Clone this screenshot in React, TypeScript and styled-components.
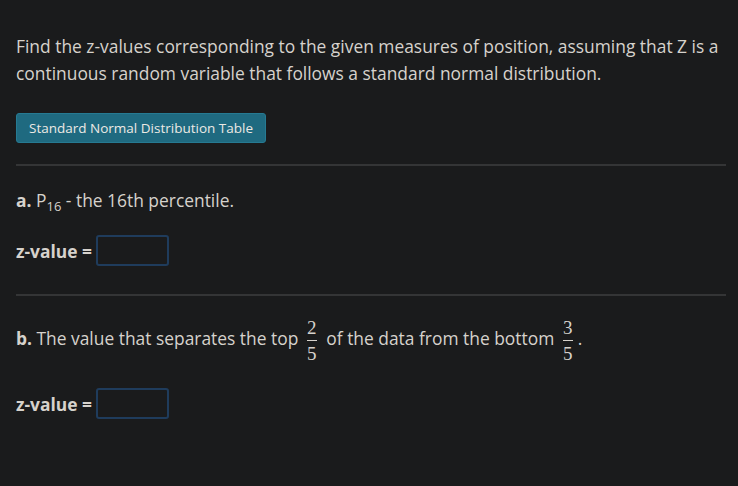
import React from 'react';
import styled, { createGlobalStyle } from 'styled-components';

const Global = createGlobalStyle`
  html, body {
    margin: 0;
    background: #1a1b1c;
  }
  body {
    font-family: "Open Sans", "Liberation Sans", sans-serif;
    color: #d6d2cc;
  }
`;

type FracProps = { num: string; den: string };

const Fraction: React.FC<FracProps> = ({ num, den }) => (
  <S.Frac>
    <S.FracNum>{num}</S.FracNum>
    <S.FracBar />
    <S.FracDen>{den}</S.FracDen>
  </S.Frac>
);

const ZValueRow: React.FC = () => (
  <S.AnswerRow>
    <S.AnswerLabel>z-value =</S.AnswerLabel>
    <S.AnswerInput type="text" aria-label="z-value" />
  </S.AnswerRow>
);

export default function App() {
  return (
    <>
      <Global />
      <S.Page>
        <S.Intro>
          Find the z-values corresponding to the given measures of position, assuming that Z is a continuous random
          variable that follows a standard normal distribution.
        </S.Intro>
        <S.TableButton type="button">Standard Normal Distribution Table</S.TableButton>

        <S.Part>
          <S.Question>
            <b>a.</b> P<sub>16</sub> - the 16th percentile.
          </S.Question>
          <ZValueRow />
        </S.Part>

        <S.Part $fractions>
          <S.Question>
            <b>b.</b> The value that separates the top <Fraction num="2" den="5" /> of the data from the bottom{' '}
            <Fraction num="3" den="5" />.
          </S.Question>
          <ZValueRow />
        </S.Part>
      </S.Page>
    </>
  );
}

const S = {
  Page: styled.div`
    padding: 33px 12px 0 16px;
    display: flex;
    flex-direction: column;
    align-items: flex-start;
  `,
  Intro: styled.p`
    margin: 0;
    font-size: 17.4px;
    line-height: 27px;
  `,
  TableButton: styled.button`
    margin-top: 26px;
    height: 30px;
    padding: 0 12px;
    background: #1f6a80;
    border: 1px solid #267a92;
    border-radius: 3px;
    color: #ece9e4;
    font-family: "Open Sans", "Liberation Sans", sans-serif;
    font-size: 13.5px;
    cursor: pointer;
  `,
  Part: styled.section<{ $fractions?: boolean }>`
    align-self: stretch;
    margin-top: ${({ $fractions }) => ($fractions ? '28px' : '21px')};
    border-top: 2px solid #343536;
    padding-top: ${({ $fractions }) => ($fractions ? '22px' : '21px')};
    display: flex;
    flex-direction: column;
    gap: ${({ $fractions }) => ($fractions ? '25px' : '21px')};
  `,
  Question: styled.div`
    font-size: 17.4px;
    line-height: 27px;
    b {
      font-weight: 700;
    }
    sub {
      font-size: 13px;
      vertical-align: -4px;
      line-height: 0;
    }
  `,
  Frac: styled.span`
    display: inline-flex;
    flex-direction: column;
    align-items: center;
    vertical-align: middle;
    margin: 0 5px 0 4px;
    font-family: "Liberation Serif", "Times New Roman", serif;
    font-weight: 400;
    font-size: 19px;
    line-height: 19px;
  `,
  FracNum: styled.span`
    padding-bottom: 3px;
  `,
  FracBar: styled.span`
    width: 10px;
    height: 1px;
    background: #d6d2cc;
  `,
  FracDen: styled.span`
    padding-top: 3px;
  `,
  AnswerRow: styled.div`
    display: flex;
    align-items: center;
    gap: 4px;
  `,
  AnswerLabel: styled.span`
    font-size: 17.4px;
    font-weight: 700;
  `,
  AnswerInput: styled.input`
    width: 73px;
    height: 31px;
    box-sizing: border-box;
    background: #1a1b1c;
    border: 2px solid #1f3c5c;
    border-radius: 3px;
    color: #d6d2cc;
    outline: none;
  `,
};
